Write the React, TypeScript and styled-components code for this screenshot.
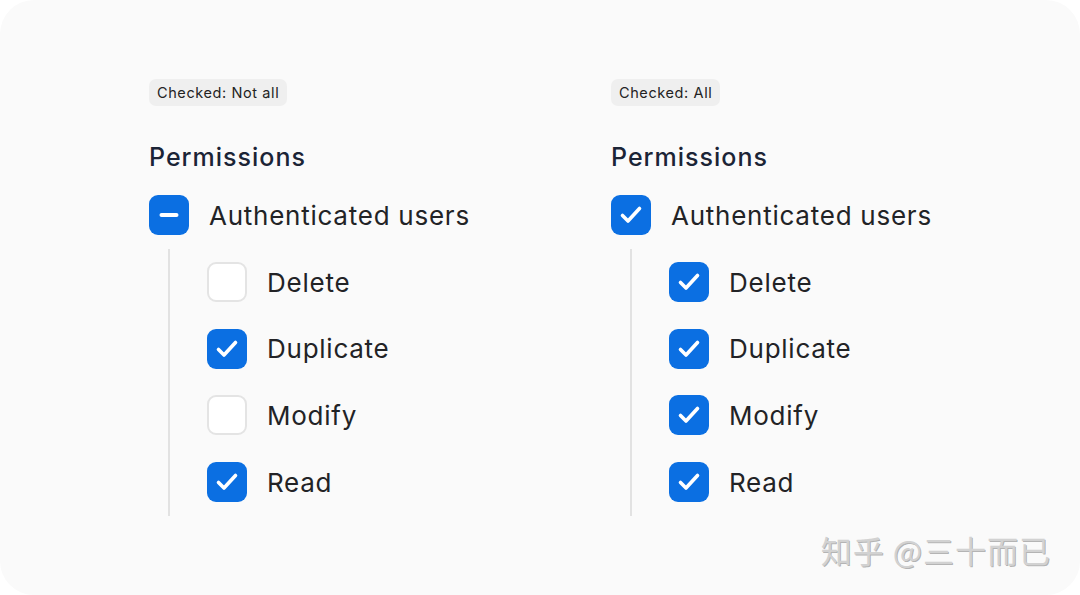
import React from "react";
import styled, { createGlobalStyle } from "styled-components";

const Global = createGlobalStyle`
  html, body { margin: 0; padding: 0; background: #ffffff; }
  body { font-family: Inter, "Noto Sans", sans-serif; }
`;

const Card = styled.div`
  position: relative;
  width: 1080px;
  height: 595px;
  box-sizing: border-box;
  background: #fafafa;
  border-radius: 34px;
  padding: 79px 0 0 149px;
  display: grid;
  grid-template-columns: 462px 1fr;
  align-items: start;
  overflow: hidden;
`;

const Column = styled.div`
  display: flex;
  flex-direction: column;
  align-items: flex-start;
`;

const Badge = styled.div`
  height: 27px;
  box-sizing: border-box;
  padding: 0 8px;
  display: flex;
  align-items: center;
  background: #efefef;
  border-radius: 7px;
  font-size: 14.5px;
  color: #232323;
  letter-spacing: 0.6px;
`;

const Heading = styled.div`
  margin-top: 35px;
  font-size: 25px;
  line-height: 32px;
  font-weight: 500;
  color: #1b2436;
  letter-spacing: 1px;
`;

const Row = styled.div`
  display: flex;
  align-items: center;
  gap: 20px;
  height: 40px;
`;

const ParentRow = styled(Row)`
  margin-top: 22px;
`;

const Label = styled.span`
  font-size: 26px;
  color: #222326;
  letter-spacing: 0.75px;
`;

const Tree = styled.div`
  margin: 14px 0 0 19px;
  border-left: 2px solid #e2e2e2;
  padding: 13px 0 14px 37px;
  display: flex;
  flex-direction: column;
  gap: 26.7px;
`;

const Box = styled.div<{ $on: boolean }>`
  width: 40px;
  height: 40px;
  box-sizing: border-box;
  border-radius: 9px;
  display: flex;
  align-items: center;
  justify-content: center;
  flex: none;
  background: ${(p) => (p.$on ? "#0b6fe2" : "#ffffff")};
  border: ${(p) => (p.$on ? "none" : "2px solid #e4e4e4")};
`;

const Watermark = styled.div`
  position: absolute;
  right: 29px;
  bottom: 27px;
  font-family: "Noto Sans CJK SC", sans-serif;
  font-size: 31px;
  line-height: 36px;
  color: #d2d2d2;
  text-shadow: 1px 1px 0 rgba(90, 90, 90, 0.45);
  letter-spacing: 1px;
`;

type State = "on" | "off" | "mixed";

function Check({ state }: { state: State }) {
  return (
    <Box $on={state !== "off"}>
      {state === "on" && (
        <svg width="40" height="40" viewBox="0 0 40 40">
          <polyline
            points="11.5,20.5 17,26 28.5,13.5"
            fill="none"
            stroke="#fff"
            strokeWidth="3.6"
            strokeLinecap="round"
            strokeLinejoin="round"
          />
        </svg>
      )}
      {state === "mixed" && (
        <svg width="40" height="40" viewBox="0 0 40 40">
          <line x1="12.5" y1="20" x2="27.5" y2="20" stroke="#fff" strokeWidth="4" strokeLinecap="round" />
        </svg>
      )}
    </Box>
  );
}

const items = ["Delete", "Duplicate", "Modify", "Read"];

function Group({ badge, parent, checked }: { badge: string; parent: State; checked: boolean[] }) {
  return (
    <Column>
      <Badge>{badge}</Badge>
      <Heading>Permissions</Heading>
      <ParentRow>
        <Check state={parent} />
        <Label>Authenticated users</Label>
      </ParentRow>
      <Tree>
        {items.map((name, i) => (
          <Row key={name}>
            <Check state={checked[i] ? "on" : "off"} />
            <Label>{name}</Label>
          </Row>
        ))}
      </Tree>
    </Column>
  );
}

export default function App() {
  return (
    <>
      <Global />
      <Card>
        <Group badge="Checked: Not all" parent="mixed" checked={[false, true, false, true]} />
        <Group badge="Checked: All" parent="on" checked={[true, true, true, true]} />
        <Watermark>知乎 @三十而已</Watermark>
      </Card>
    </>
  );
}
